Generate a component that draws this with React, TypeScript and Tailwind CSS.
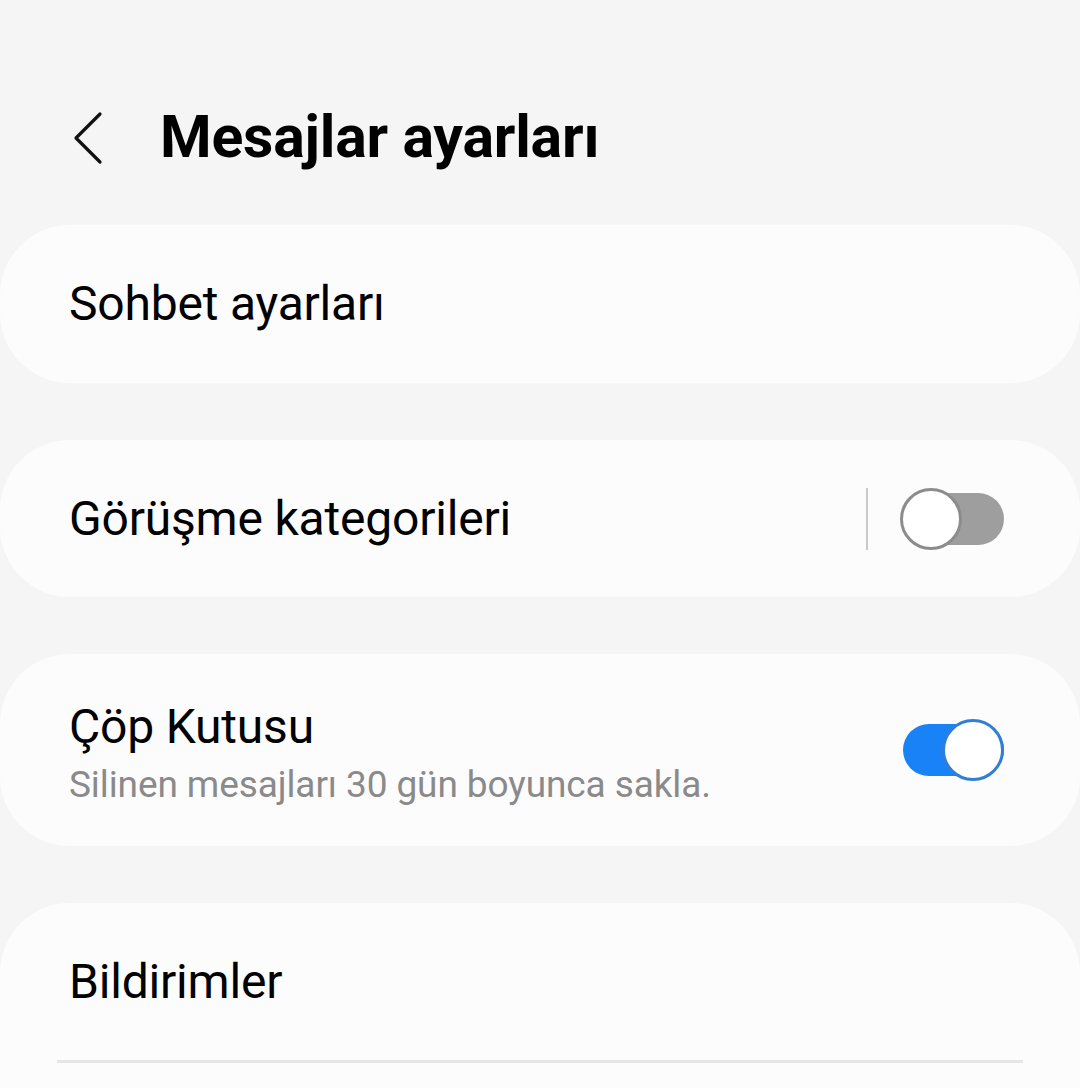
import React, { useState } from 'react';

const Toggle = ({ on, onChange }: { on: boolean; onChange: () => void }) => {
  return (
    <button onClick={onChange} className="relative w-[104px] h-[64px] flex items-center shrink-0">
      <span
        className={`absolute right-0 h-[52px] rounded-full ${on ? 'left-[3px] bg-[#1a82f7]' : 'left-[4px] bg-[#9e9e9e]'}`}
      />
      <span
        className={`absolute w-[62px] h-[62px] rounded-full bg-white border-[3px] ${
          on ? 'right-0 border-[#2f7fd6]' : 'left-0 border-[#8c8c8c]'
        }`}
      />
    </button>
  );
};

const App = () => {
  const [categories, setCategories] = useState(false);
  const [trash, setTrash] = useState(true);

  return (
    <div className="w-[1080px] h-[1088px] bg-[#f5f5f5] overflow-hidden font-['Roboto',sans-serif] text-black">
      <div className="flex items-center h-[225px] pl-[68px] pt-[50px]">
        <svg width="40" height="56" viewBox="0 0 40 56" className="shrink-0">
          <path d="M32 4 L8 28 L32 52" fill="none" stroke="#111" strokeWidth="3.2" strokeLinecap="round" strokeLinejoin="round" />
        </svg>
        <h1 className="ml-[52px] text-[59px] font-bold tracking-[-0.2px]">Mesajlar ayarları</h1>
      </div>

      <div className="flex flex-col gap-[57px]">
        <div className="h-[158px] bg-[#fcfcfc] rounded-[70px] flex items-center px-[69px]">
          <span className="text-[48px] tracking-[-0.2px]">Sohbet ayarları</span>
        </div>

        <div className="h-[157px] bg-[#fcfcfc] rounded-[70px] flex items-center pl-[69px] pr-[76px]">
          <span className="flex-1 text-[48px] tracking-[-0.2px]">Görüşme kategorileri</span>
          <div className="w-[2px] h-[62px] bg-[#c9c9c9] mr-[32px]" />
          <Toggle on={categories} onChange={() => setCategories(!categories)} />
        </div>

        <div className="h-[192px] bg-[#fcfcfc] rounded-[70px] flex items-center pl-[69px] pr-[76px]">
          <div className="flex-1 flex flex-col pt-[9px]">
            <span className="text-[48px] tracking-[-0.2px] leading-[56px]">Çöp Kutusu</span>
            <span className="mt-[5px] text-[37px] tracking-[-0.1px] leading-[50px] text-[#8a8a8a]">
              Silinen mesajları 30 gün boyunca sakla.
            </span>
          </div>
          <Toggle on={trash} onChange={() => setTrash(!trash)} />
        </div>

        <div className="bg-[#fcfcfc] rounded-t-[70px] flex flex-col">
          <div className="h-[157px] flex items-center px-[69px]">
            <span className="text-[48px] tracking-[-0.2px]">Bildirimler</span>
          </div>
          <div className="mx-[57px] h-[3px] bg-[#e6e6e6]" />
          <div className="h-[60px]" />
        </div>
      </div>
    </div>
  );
};

export default App;
